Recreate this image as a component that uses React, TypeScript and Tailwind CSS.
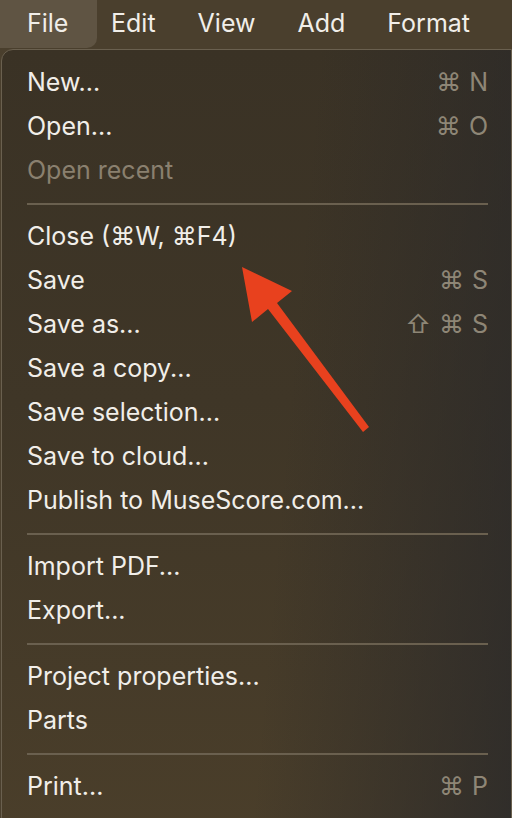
const font = { fontFamily: 'Inter, "DejaVu Sans", sans-serif' };

type Item =
  | { kind: "item"; label: string; keys?: string[]; disabled?: boolean }
  | { kind: "sep" };

const items: Item[] = [
  { kind: "item", label: "New...", keys: ["⌘", "N"] },
  { kind: "item", label: "Open...", keys: ["⌘", "O"] },
  { kind: "item", label: "Open recent", disabled: true },
  { kind: "sep" },
  { kind: "item", label: "Close (⌘W, ⌘F4)" },
  { kind: "item", label: "Save", keys: ["⌘", "S"] },
  { kind: "item", label: "Save as...", keys: ["⇧", "⌘", "S"] },
  { kind: "item", label: "Save a copy..." },
  { kind: "item", label: "Save selection..." },
  { kind: "item", label: "Save to cloud..." },
  { kind: "item", label: "Publish to MuseScore.com..." },
  { kind: "sep" },
  { kind: "item", label: "Import PDF..." },
  { kind: "item", label: "Export..." },
  { kind: "sep" },
  { kind: "item", label: "Project properties..." },
  { kind: "item", label: "Parts" },
  { kind: "sep" },
  { kind: "item", label: "Print...", keys: ["⌘", "P"] },
];

function App() {
  return (
    <div
      className="relative w-[512px] h-[818px] overflow-hidden bg-[#4a3f2d] text-[#f1eee9]"
      style={font}
    >
      {/* menu bar */}
      <div className="flex h-[48px] items-stretch text-[25px]">
        <div className="flex w-[97px] items-center pl-[27px] rounded-br-[10px] bg-[#5f5443]">
          File
        </div>
        <div className="ml-[14px] flex items-center gap-[42px]">
          <span>Edit</span>
          <span>View</span>
          <span>Add</span>
          <span>Format</span>
        </div>
      </div>

      {/* dropdown */}
      <div className="mt-[1px] ml-[1px] h-[780px] rounded-tl-[12px] rounded-bl-[12px] border border-[#6a604f] bg-[linear-gradient(95deg,rgba(0,0,0,0)_55%,rgba(40,40,42,0.75)_100%),linear-gradient(180deg,#3a3225_0%,#3f3627_45%,#4a3e2a_100%)] pt-[11px] pl-[25px] pr-[23px]">
        {items.map((it, idx) =>
          it.kind === "sep" ? (
            <div key={idx} className="flex h-[22px] items-center">
              <div className="h-[2px] w-full bg-[#6a604f]" />
            </div>
          ) : (
            <div
              key={idx}
              className={
                "flex h-[44px] items-center justify-between text-[25px] " +
                (it.disabled ? "text-[#8a806f]" : "")
              }
            >
              <span>{it.label}</span>
              {it.keys && (
                <span className="flex items-center gap-[8px] text-[#8e8676]">
                  {it.keys.map((k, j) => (
                    <span key={j}>{k}</span>
                  ))}
                </span>
              )}
            </div>
          )
        )}
      </div>

      {/* annotation arrow */}
      <svg
        className="absolute left-0 top-0"
        width="512"
        height="818"
        viewBox="0 0 512 818"
      >
        <polygon
          points="242,267 292,291 277,303 369,427 363,432 268,309 252,322"
          fill="#e8411e"
        />
      </svg>
    </div>
  );
}

export default App;
